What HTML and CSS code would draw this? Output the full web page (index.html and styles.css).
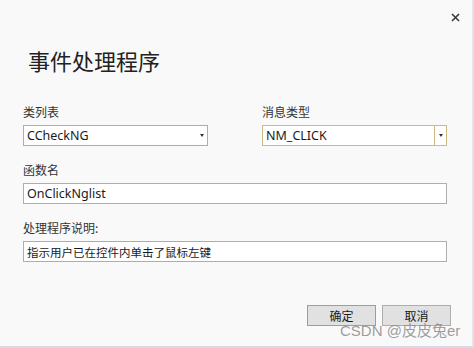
FILE: index.html
```html
<!DOCTYPE html>
<html lang="zh-CN">
<head>
    <meta charset="UTF-8">
    <meta name="viewport" content="width=device-width, initial-scale=1.0">
    <title>事件处理程序</title>
    <link rel="stylesheet" href="styles.css">
</head>
<body>
    <div class="dialog">
        <div class="titlebar">
            <span class="close">
                <svg width="9" height="9" viewBox="0 0 9 9"><path d="M1 1L8 8M8 1L1 8" stroke="#3a3a3a" stroke-width="1.6"/></svg>
            </span>
        </div>
        <h1 class="title">事件处理程序</h1>
        <div class="form">
            <div class="row">
                <div class="field">
                    <label class="label">类列表</label>
                    <div class="combo">
                        <span class="value">CCheckNG</span>
                        <span class="arrow"></span>
                    </div>
                </div>
                <div class="field">
                    <label class="label">消息类型</label>
                    <div class="combo focused">
                        <span class="value">NM_CLICK</span>
                        <span class="arrow split"></span>
                    </div>
                </div>
            </div>
            <div class="field">
                <label class="label">函数名</label>
                <div class="input">OnClickNglist</div>
            </div>
            <div class="field">
                <label class="label">处理程序说明:</label>
                <div class="input cjk">指示用户已在控件内单击了鼠标左键</div>
            </div>
        </div>
        <div class="buttons">
            <button class="btn default">确定</button>
            <button class="btn">取消</button>
        </div>
        <div class="watermark">CSDN @皮皮兔er</div>
    </div>
</body>
</html>
```

FILE: styles.css
```css
body {
    margin: 0;
    background-color: #f9f9f9;
    font-family: "Noto Sans", "Noto Sans CJK SC", sans-serif;
    color: #1e1e1e;
}
.dialog {
    position: relative;
    width: 474px;
    height: 348px;
    box-sizing: border-box;
    padding: 0 25px 0 23px;
    border-right: 2px solid #e3e3e3;
    border-bottom: 2px solid #d6d9e2;
    display: flex;
    flex-direction: column;
}
.titlebar {
    height: 34px;
    display: flex;
    justify-content: flex-end;
    align-items: flex-start;
    margin-right: -13px;
}
.close {
    margin-top: 13px;
    line-height: 0;
}
.title {
    margin: 12px 0 0 5px;
    font-family: "Noto Sans CJK SC", sans-serif;
    font-size: 22px;
    font-weight: 400;
    line-height: 28px;
    color: #222;
}
.form {
    margin-top: 30px;
    display: flex;
    flex-direction: column;
    gap: 16px;
}
.row {
    display: grid;
    grid-template-columns: 185px 185px;
    justify-content: space-between;
}
.field {
    display: flex;
    flex-direction: column;
    gap: 5px;
}
.label {
    font-family: "Noto Sans CJK SC", sans-serif;
    font-size: 12px;
    line-height: 16px;
    color: #333;
}
.combo, .input {
    height: 21px;
    box-sizing: border-box;
    border: 1px solid #adadad;
    background: #fff;
    display: flex;
    align-items: center;
    font-size: 12.5px;
    color: #1a1a1a;
}
.combo .value, .input {
    padding-left: 3px;
}
.combo .value {
    flex: 1;
}
.combo.focused {
    border-color: #cdb982;
}
.arrow {
    width: 11px;
    height: 100%;
    display: flex;
    align-items: center;
    justify-content: center;
}
.arrow::after {
    content: "";
    border-left: 2.5px solid transparent;
    border-right: 2.5px solid transparent;
    border-top: 3px solid #333;
}
.arrow.split {
    border-left: 1px solid #cdb982;
}
.input.cjk {
    font-family: "Noto Sans CJK SC", sans-serif;
    font-size: 11.5px;
}
.buttons {
    margin-top: 43px;
    margin-right: -4px;
    display: flex;
    justify-content: flex-end;
    gap: 6px;
}
.btn {
    width: 69px;
    height: 21px;
    padding: 0;
    border: 1px solid #adadad;
    background: #e1e1e1;
    font-family: "Noto Sans CJK SC", sans-serif;
    font-size: 12px;
    line-height: 14px;
    color: #1a1a1a;
}
.btn.default {
    border-color: #6aa9e6;
}
.watermark {
    position: absolute;
    left: 340px;
    top: 325px;
    font-family: "Liberation Sans", "Noto Sans CJK SC", sans-serif;
    font-size: 15px;
    line-height: 12px;
    color: rgba(140, 140, 140, 0.85);
    white-space: nowrap;
}
```
